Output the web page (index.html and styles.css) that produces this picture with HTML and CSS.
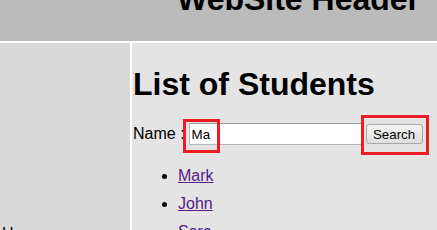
FILE: index.html
```html
<!DOCTYPE html>
<html lang="en">
<head>
    <meta charset="UTF-8">
    <title>List of Students</title>
    <link rel="stylesheet" href="styles.css">
</head>
<body>
    <!-- Header -->
    <div class="site-header">
        <h1>WebSite Header</h1>
    </div>

    <div class="page">
        <!-- Left menu -->
        <div class="sidebar">
            <a class="nav-link" href="#">Home</a>
        </div>

        <!-- Main content -->
        <div class="main">
            <h1 class="title">List of Students</h1>
            <div class="search-row">
                <label for="name" class="name-label">Name :</label>
                <input type="text" id="name" class="name-input" value="Ma">
                <button class="search-button">Search</button>
                <!-- annotation boxes -->
                <div class="mark mark-input"></div>
                <div class="mark mark-button"></div>
            </div>
            <ul class="students">
                <li><a href="#">Mark</a></li>
                <li><a href="#">John</a></li>
                <li><a href="#">Sara</a></li>
            </ul>
        </div>
    </div>
</body>
</html>
```

FILE: styles.css
```css
body {
    margin: 0;
    font-family: "Liberation Sans", Arial, sans-serif;
    font-size: 16px;
    background-color: #ffffff;
    color: #000000;
    height: 100vh;
    display: flex;
    flex-direction: column;
    overflow: hidden;
}
.site-header {
    height: 41px;
    background-color: #bbbbbb;
    margin-bottom: 2px;
    flex-shrink: 0;
    overflow: hidden;
}
.site-header h1 {
    margin: -17px 0 0 177px;
    font-size: 32px;
    line-height: 32px;
    white-space: nowrap;
}
.page {
    display: flex;
    gap: 2px;
    flex: 1;
}
.sidebar {
    width: 130px;
    flex-shrink: 0;
    background-color: #d9d9d9;
    padding: 182px 0 0 2px;
    box-sizing: border-box;
}
.nav-link {
    color: #000000;
    text-decoration: none;
}
.main {
    flex: 1;
    background-color: #e4e4e4;
    padding-left: 1px;
}
.title {
    margin: 23px 0 20px 0;
    font-size: 32px;
}
.search-row {
    position: relative;
    display: flex;
    align-items: center;
    height: 22px;
}
.name-label {
    margin-right: 4px;
}
.name-input {
    width: 173px;
    height: 22px;
    box-sizing: border-box;
    margin: 0;
    padding: 0 2px;
    border: 1px solid #b5b5b5;
    border-top-color: #9a9a9a;
    background-color: #ffffff;
    font-family: "Liberation Sans", Arial, sans-serif;
    font-size: 13.33px;
    color: #000000;
}
.search-button {
    margin-left: 4px;
    width: 57px;
    height: 20px;
    padding: 0;
    border: 1px solid #a8a8a8;
    border-radius: 3px;
    background: linear-gradient(#f4f4f4, #dedede);
    font-family: "Liberation Sans", Arial, sans-serif;
    font-size: 13.33px;
    color: #000000;
}
.mark {
    position: absolute;
    border: 3px solid #ec1c24;
}
.mark-input {
    left: 50px;
    top: -4px;
    width: 31px;
    height: 28px;
}
.mark-button {
    left: 228px;
    top: -8px;
    width: 62px;
    height: 34px;
}
.students {
    margin: 22px 0 0 0;
    padding-left: 45px;
}
.students li {
    margin-bottom: 10px;
}
.students a {
    color: #551a8b;
}
```
